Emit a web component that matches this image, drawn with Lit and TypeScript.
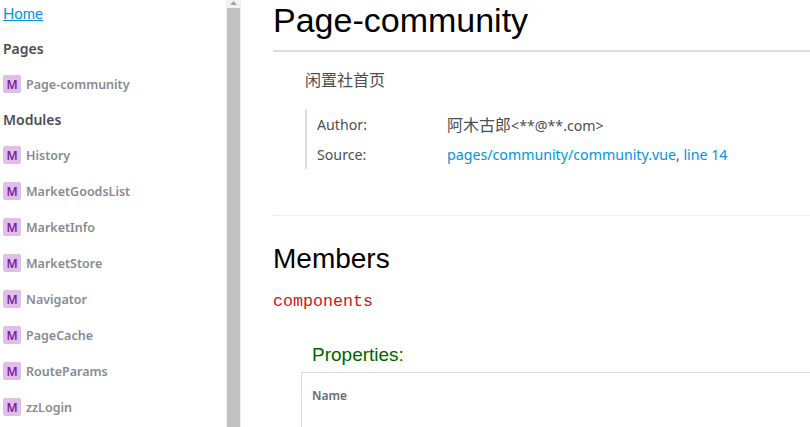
import { LitElement, html, css } from "lit";
import { customElement } from "lit/decorators.js";

const modules = ["History", "MarketGoodsList", "MarketInfo", "MarketStore", "Navigator", "PageCache", "RouteParams", "zzLogin"];

@customElement("app-root")
export class AppRoot extends LitElement {
  static styles = css`
    :host { display: flex; width: 810px; height: 427px; overflow: hidden; background: #fff; font-family: "Noto Sans", "Noto Sans CJK SC", sans-serif; color: #4d4e53; }
    .side { width: 226px; flex: none; padding: 2px 0 0 3px; box-sizing: border-box; }
    .home { display: block; font-family: "Lato", sans-serif; font-size: 15px; line-height: 22px; color: #0095dd; text-decoration: underline; }
    .group { font-size: 14px; font-weight: 600; line-height: 20px; color: #4d4e53; margin: 15px 0 0; }
    .group + .item { margin-top: 16px; }
    .item { display: flex; align-items: center; gap: 5px; height: 18px; margin-bottom: 18px; font-size: 12.5px; font-weight: 600; color: #8a8a8f; }
    .item + .group { margin-top: -1px; }
    .m { width: 18px; height: 18px; border-radius: 2px; background: #e1bee7; color: #7b1fa2; font-size: 12px; font-weight: 600; display: flex; align-items: center; justify-content: center; }
    .bar { width: 15px; flex: none; background: #f1f1f1; display: flex; flex-direction: column; align-items: center; box-sizing: border-box; }
    .arrow { height: 8px; flex: none; display: flex; align-items: flex-start; justify-content: center; }
    .thumb { flex: 1; width: 13px; background: #c1c1c1; }
    .main { flex: 1; padding-left: 32px; min-width: 0; }
    h1 { margin: 0; font: 400 34px/40px "Liberation Sans", sans-serif; color: #000; padding: 0 0 10px; border-bottom: 2px solid #ddd; white-space: nowrap; }
    .desc { margin: 16px 0 0 32px; font-size: 14px; line-height: 24px; color: #4d4e53; }
    .cjk { font-size: 16px; }
    .details { margin: 16px 0 0 32px; border-left: 2px solid #ddd; padding: 0 0 3px 10px; display: grid; grid-template-columns: 130px 1fr; grid-auto-rows: 30px; align-items: center; font-size: 14.2px; height: 60px; box-sizing: border-box; }
    a { color: #0095dd; text-decoration: none; }
    hr { border: 0; border-top: 1px solid #eee; margin: 46px 0 0; }
    h2 { margin: 24px 0 0; font: 400 28px/38px "Liberation Sans", sans-serif; color: #000; }
    .name { margin: 13px 0 0; font: 400 16.67px/22px "Liberation Mono", monospace; color: #c7161d; }
    h5 { margin: 30px 0 0 39px; font: 400 19px/24px "Liberation Sans", sans-serif; color: #006400; }
    .table { margin: 5px 0 0 28px; border: 1px solid #ddd; border-right: 0; height: 200px; padding: 14px 10px; box-sizing: border-box; font-size: 12px; font-weight: 600; color: #6a6a70; line-height: 17px; }
  `;

  render() {
    return html`
      <nav class="side">
        <a class="home" href="#">Home</a>
        <div class="group">Pages</div>
        <div class="item"><span class="m">M</span>Page-community</div>
        <div class="group">Modules</div>
        ${modules.map((m) => html`<div class="item"><span class="m">M</span>${m}</div>`)}
      </nav>
      <div class="bar">
        <div class="arrow"><svg width="9" height="6" viewBox="0 0 9 6"><path d="M1 5h7L4.500 1z" fill="#a3a3a3"/></svg></div>
        <div class="thumb"></div>
      </div>
      <main class="main">
        <h1>Page-community</h1>
        <div class="desc"><span class="cjk">闲置社首页</span></div>
        <div class="details">
          <span>Author:</span><span><span class="cjk">阿木古郎</span>&lt;**@**.com&gt;</span>
          <span>Source:</span><span><a href="#">pages/community/community.vue</a>, <a href="#">line 14</a></span>
        </div>
        <hr />
        <h2>Members</h2>
        <div class="name">components</div>
        <h5>Properties:</h5>
        <div class="table">Name</div>
      </main>
    `;
  }
}
